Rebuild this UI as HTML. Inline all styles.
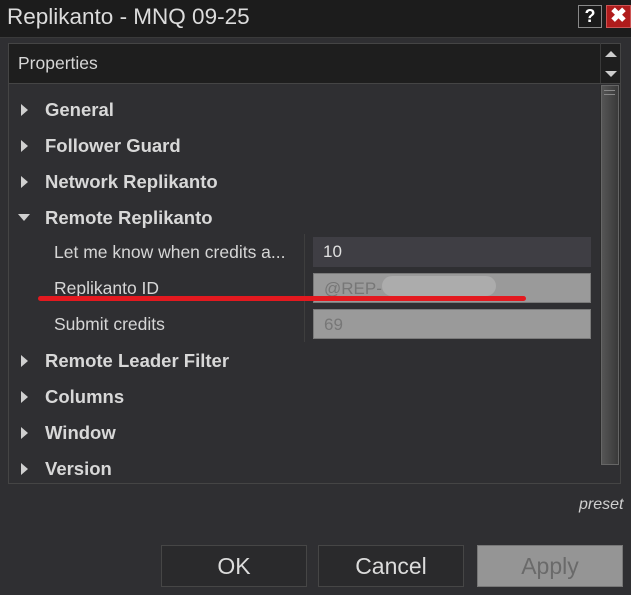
<!DOCTYPE html>
<html><head><style>
*{margin:0;padding:0;box-sizing:border-box}
body{width:631px;height:595px;background:#2f2f32;font-family:"Liberation Sans",sans-serif;position:relative;overflow:hidden;color:#d6d6d6}
.a{position:absolute;white-space:nowrap}
.title{left:0;top:0;width:631px;height:38px;background:#1c1c1c;border-bottom:1px solid #3a3a3a}
.t{left:7px;top:4px;font-size:22.5px;color:#dcdcdc}
.hdr{left:8px;top:43px;width:613px;height:41px;background:#1e1e1e;border:1px solid #454545}
.panel{left:8px;top:83px;width:613px;height:401px;border:1px solid #454545;overflow:hidden}
.cat{font-weight:bold;font-size:18.5px;color:#d8d8d8;left:45px}
.tri{left:21px;width:0;height:0;border-top:6px solid transparent;border-bottom:6px solid transparent;border-left:7px solid #d0d0d0}
.sub{font-size:17.5px;color:#d6d6d6;left:54px}
.box{left:313px;width:278px;height:30px;font-size:17px;padding:5px 10px}
.btn{top:545px;height:42px;width:146px;border:1px solid #464646;font-size:23px;text-align:center;line-height:40px;background:#2a2a2c;color:#dcdcdc}
</style></head><body>
<div class="a title"></div>
<div class="a t">Replikanto - MNQ 09-25</div>
<div class="a" style="left:578px;top:5px;width:24px;height:23px;background:#1a1a1a;border:1px solid #888;color:#fff;font-weight:bold;font-size:18px;text-align:center;line-height:21px">?</div>
<div class="a" style="left:606px;top:5px;width:25px;height:23px;background:#b01c1c;border:1px solid #c55;color:#fff;font-weight:bold;font-size:20px;text-align:center;line-height:21px">✖</div>
<div class="a hdr"></div>
<div class="a" style="left:18px;top:53px;font-size:17.5px;color:#d6d6d6">Properties</div>
<div class="a" style="left:600px;top:43px;width:1px;height:41px;background:#3a3a3a"></div>
<div class="a" style="left:605px;top:51px;border-left:6px solid transparent;border-right:6px solid transparent;border-bottom:6px solid #ccc"></div>
<div class="a" style="left:605px;top:71px;border-left:6px solid transparent;border-right:6px solid transparent;border-top:6px solid #ccc"></div>
<div class="a panel"></div>
<div class="a" style="left:600px;top:85px;width:20px;height:380px;background:#2a2a2a"></div>
<div class="a" style="left:601px;top:85px;width:18px;height:380px;background:linear-gradient(90deg,#555,#3a3a3a);border:1px solid #666"></div>
<div class="a" style="left:604px;top:90px;width:11px;height:1px;background:#888"></div>
<div class="a" style="left:604px;top:94px;width:11px;height:1px;background:#888"></div>

<div class="a tri" style="top:104px"></div><div class="a cat" style="top:99px">General</div>
<div class="a tri" style="top:140px"></div><div class="a cat" style="top:135px">Follower Guard</div>
<div class="a tri" style="top:176px"></div><div class="a cat" style="top:171px">Network Replikanto</div>
<div class="a" style="left:18px;top:214px;border-left:6px solid transparent;border-right:6px solid transparent;border-top:7px solid #d0d0d0"></div><div class="a cat" style="top:207px">Remote Replikanto</div>

<div class="a" style="left:304px;top:234px;width:1px;height:108px;background:#3e3e3e"></div>
<div class="a sub" style="top:242px">Let me know when credits a...</div>
<div class="a sub" style="top:278px">Replikanto ID</div>
<div class="a sub" style="top:314px">Submit credits</div>
<div class="a box" style="top:237px;background:#3f3e44;color:#e0e0e0">10</div>
<div class="a box" style="top:273px;background:#9a9a9a;border:1px solid #7a7a7a;color:#777">@REP-</div>
<div class="a" style="left:382px;top:276px;width:114px;height:20px;border-radius:10px;background:#acacac"></div>
<div class="a box" style="top:309px;background:#9a9a9a;border:1px solid #7a7a7a;color:#777">69</div>
<div class="a" style="left:38px;top:296px;width:488px;height:5px;border-radius:3px;background:#e3191f"></div>

<div class="a tri" style="top:355px"></div><div class="a cat" style="top:350px">Remote Leader Filter</div>
<div class="a tri" style="top:391px"></div><div class="a cat" style="top:386px">Columns</div>
<div class="a tri" style="top:427px"></div><div class="a cat" style="top:422px">Window</div>
<div class="a" style="left:9px;top:455px;width:590px;height:28px;overflow:hidden">
<div class="a tri" style="left:12px;top:8px"></div><div class="a cat" style="left:36px;top:3px">Version</div></div>

<div class="a" style="left:579px;top:496px;font-size:16px;font-style:italic;color:#cfcfcf">preset</div>
<div class="a btn" style="left:161px">OK</div>
<div class="a btn" style="left:318px">Cancel</div>
<div class="a btn" style="left:477px;background:#959595;border-color:#777;color:#6a6a6a">Apply</div>
</body></html>
